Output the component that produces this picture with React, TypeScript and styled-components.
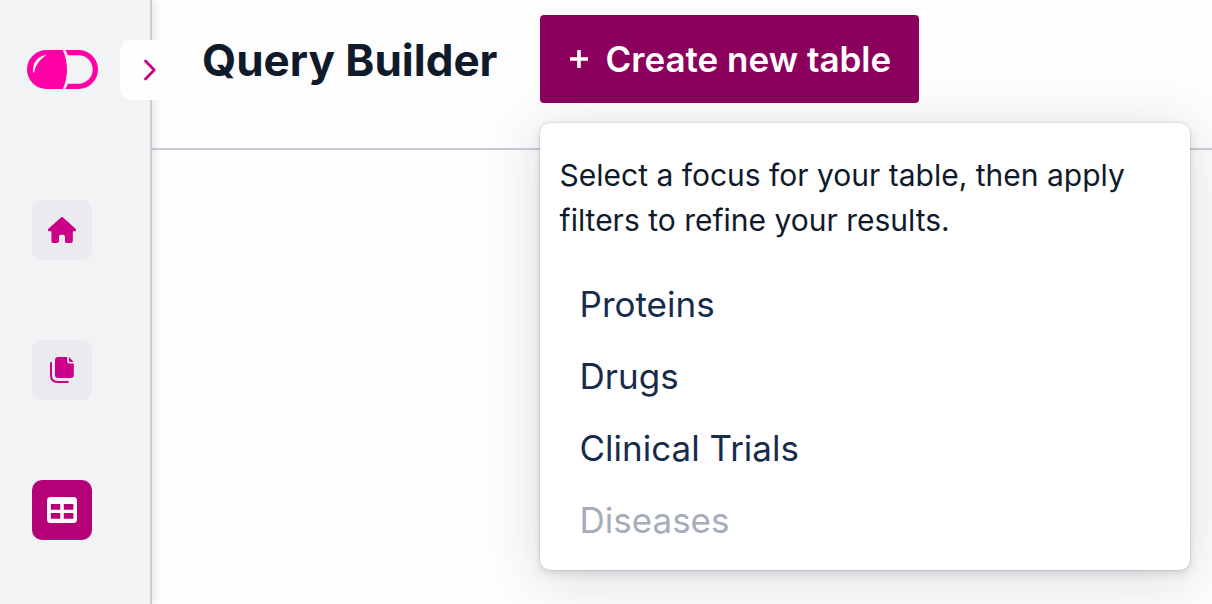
import React from "react";
import styled, { createGlobalStyle } from "styled-components";

const GlobalStyle = createGlobalStyle`
  *, *::before, *::after { box-sizing: border-box; }
  body {
    margin: 0;
    background: #fdfdfd;
    color: #0f1a2a;
    font-family: Inter, "Liberation Sans", sans-serif;
  }
  button { font: inherit; border: 0; padding: 0; cursor: pointer; }
`;

const Page = styled.div`
  display: flex;
  min-height: 100vh;
`;

const Sidebar = styled.aside`
  position: relative;
  z-index: 1;
  flex: none;
  width: 152px;
  padding: 50px 0 64px 27px;
  background: #f1f3f5;
  border-right: 2px solid #c8cdd8;
  box-shadow: 2px 0 8px rgba(15, 23, 42, 0.1);
`;

const LogoLink = styled.a`
  display: block;
  width: 71px;
  height: 39px;

  svg { display: block; }
`;

const SidebarToggle = styled.button`
  position: absolute;
  top: 40px;
  right: -30px;
  display: flex;
  align-items: center;
  justify-content: center;
  width: 60px;
  height: 60px;
  border-radius: 10px;
  background: #fdfdfd;
  color: #c9007f;
`;

const NavList = styled.nav`
  display: flex;
  flex-direction: column;
  gap: 80px;
  margin-top: 111px;
  padding-left: 5px;
`;

const NavLink = styled.a<{ $active?: boolean }>`
  display: flex;
  align-items: center;
  justify-content: center;
  width: 60px;
  height: 60px;
  border-radius: 10px;
  background: ${({ $active }) => ($active ? "#b50078" : "#e9ebee")};
  color: ${({ $active }) => ($active ? "#ffffff" : "#cc0088")};
`;

const Main = styled.main`
  flex: 1;
  min-width: 0;
`;

const Header = styled.header`
  display: flex;
  align-items: flex-start;
  gap: 42px;
  height: 150px;
  padding: 15px 20px 0 50px;
  border-bottom: 2px solid #c8cdd5;
`;

const Title = styled.h1`
  margin: 0;
  font-size: 44px;
  font-weight: 700;
  line-height: 90px;
  white-space: nowrap;
`;

const MenuAnchor = styled.div`
  position: relative;
`;

const CreateButton = styled.button`
  display: flex;
  align-items: center;
  gap: 16px;
  height: 88px;
  padding: 0 28px;
  border-radius: 4px;
  background: #8b005c;
  color: #ffffff;
  font-size: 35px;
  font-weight: 600;
  white-space: nowrap;
`;

const Popover = styled.div`
  position: absolute;
  top: 108px;
  left: 0;
  z-index: 2;
  width: 650px;
  padding: 30px 20px 14px;
  border-radius: 10px;
  background: #ffffff;
  box-shadow: 0 0 2px rgba(15, 23, 42, 0.25), 0 4px 8px rgba(15, 23, 42, 0.12),
    0 8px 56px rgba(15, 23, 42, 0.14);
`;

const Hint = styled.p`
  margin: 0;
  font-size: 30px;
  line-height: 45px;
`;

const FocusList = styled.ul`
  margin: 25px 0 0;
  padding: 0;
  list-style: none;
`;

const FocusOption = styled.button`
  display: block;
  width: 100%;
  height: 72px;
  padding: 0 20px;
  background: transparent;
  color: #172b4d;
  font-size: 35px;
  text-align: left;

  &:disabled {
    color: #a5adba;
    cursor: default;
  }
`;

const PillLogo = () => (
  <svg width="71" height="39" viewBox="0 0 71 39" aria-hidden="true">
    <path
      fill="#ff00a8"
      d="M19 0H35.8C38.5 6 40 12.500 40 19.500S38.500 33 35.800 39H19.500A19.500 19.500 0 0 1 19.500 0Z"
    />
    <path
      fill="#f1f3f5"
      d="M19.500 5C12 5.500 5.500 11.500 6 21.500L7 23.500C8 16 11.500 10.500 19.500 5Z"
    />
    <path
      fill="#ff00a8"
      d="M38.300 0H51.500A19.500 19.500 0 0 1 51.500 39H38.300C39.300 37.500 40 35.500 41 33.700H51.500A14.200 14.200 0 0 0 51.500 5.300H41C40.200 3.500 39.200 1.500 38.300 0Z"
    />
  </svg>
);

const ChevronIcon = () => (
  <svg width="12" height="22" viewBox="0 0 12 22" fill="none" aria-hidden="true">
    <path
      d="M1.500 2L10.200 11L1.500 20"
      stroke="currentColor"
      strokeWidth="2.700"
      strokeLinecap="round"
      strokeLinejoin="round"
    />
  </svg>
);

const HomeIcon = () => (
  <svg width="28" height="26" viewBox="0 0 28 26" fill="currentColor" aria-hidden="true">
    <path d="M13 .4a1.500 1.500 0 0 1 2 0L27.600 11.800C28.600 12.800 28 14.300 26.700 14.300H24.800V24.300Q24.800 26 23 26H18.800Q17 26 17 24.300V19.700Q17 17.700 15 17.700H13Q11 17.700 11 19.700V24.300Q11 26 9.200 26H5.200Q3.400 26 3.400 24.300V14.300H1.500C0 14.300-.6 12.800.4 11.800Z" />
  </svg>
);

const FilesIcon = () => (
  <svg width="24" height="26" viewBox="0 0 24 26" fill="currentColor" aria-hidden="true">
    <path d="M8 0H17.200V4.500Q17.200 6.500 19.200 6.500H23.800V18Q23.800 21 20.800 21H8Q5 21 5 18V3Q5 0 8 0Z" />
    <path d="M19 0L23.800 4.900H20Q19 4.900 19 3.900Z" />
    <path
      d="M1 6V18.300Q1 25 7.700 25H17.800"
      fill="none"
      stroke="currentColor"
      strokeWidth="2"
      strokeLinecap="round"
    />
  </svg>
);

const TableIcon = () => (
  <svg width="30" height="26" viewBox="0 0 30 26" fill="currentColor" aria-hidden="true">
    <path
      fillRule="evenodd"
      d="M3.500 0H26.500Q30 0 30 3.500V22.500Q30 26 26.500 26H3.500Q0 26 0 22.500V3.500Q0 0 3.500 0ZM3.800 7V12.800H13.200V7ZM16.800 7V12.800H26.400V7ZM3.800 16V21.800H13.200V16ZM16.800 16V21.800H26.400V16Z"
    />
  </svg>
);

const PlusIcon = () => (
  <svg width="22" height="22" viewBox="0 0 22 22" aria-hidden="true">
    <path d="M11 2V20M2 11H20" stroke="currentColor" strokeWidth="3.600" />
  </svg>
);

const navItems = [
  { label: "Home", icon: <HomeIcon /> },
  { label: "Documents", icon: <FilesIcon /> },
  { label: "Tables", icon: <TableIcon />, active: true },
];

const focusOptions = [
  { name: "Proteins" },
  { name: "Drugs" },
  { name: "Clinical Trials" },
  { name: "Diseases", disabled: true },
];

export default function App() {
  const [open, setOpen] = React.useState(true);

  return (
    <>
      <GlobalStyle />
      <Page>
        <Sidebar>
          <LogoLink href="#" aria-label="Dashboard">
            <PillLogo />
          </LogoLink>
          <SidebarToggle type="button" aria-label="Expand sidebar">
            <ChevronIcon />
          </SidebarToggle>
          <NavList aria-label="Primary">
            {navItems.map(({ label, icon, active }) => (
              <NavLink
                key={label}
                href="#"
                aria-label={label}
                aria-current={active ? "page" : undefined}
                $active={active}
              >
                {icon}
              </NavLink>
            ))}
          </NavList>
        </Sidebar>
        <Main>
          <Header>
            <Title>Query Builder</Title>
            <MenuAnchor>
              <CreateButton type="button" aria-expanded={open} onClick={() => setOpen(!open)}>
                <PlusIcon />
                Create new table
              </CreateButton>
              {open && (
                <Popover>
                  <Hint>Select a focus for your table, then apply filters to refine your results.</Hint>
                  <FocusList>
                    {focusOptions.map(({ name, disabled }) => (
                      <li key={name}>
                        <FocusOption type="button" disabled={disabled}>
                          {name}
                        </FocusOption>
                      </li>
                    ))}
                  </FocusList>
                </Popover>
              )}
            </MenuAnchor>
          </Header>
        </Main>
      </Page>
    </>
  );
}
